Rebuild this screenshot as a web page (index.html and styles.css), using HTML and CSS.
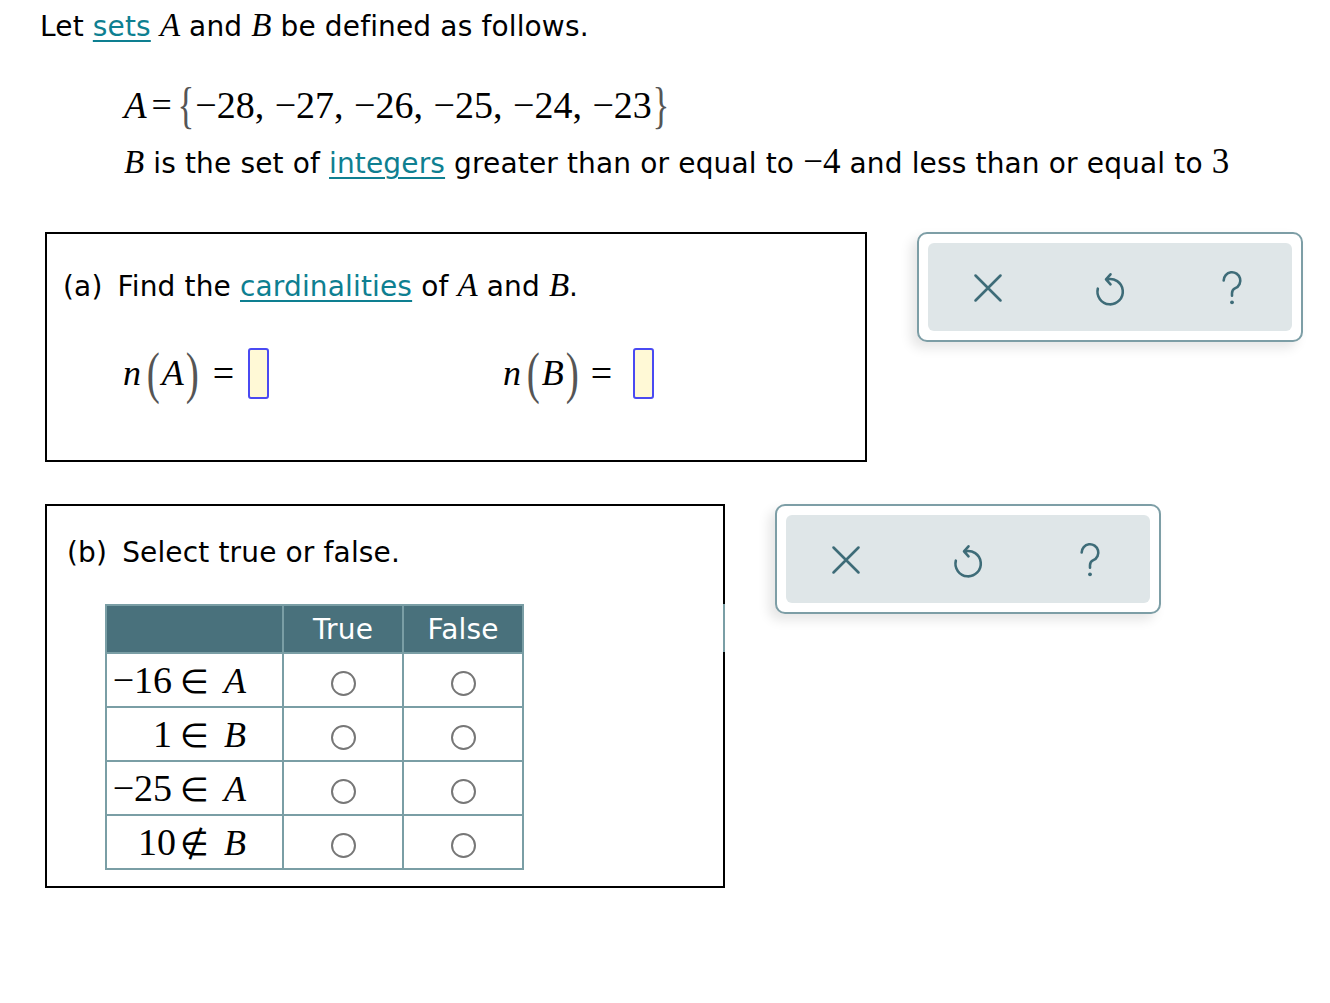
FILE: index.html
```html
<!DOCTYPE html>
<html>
<head>
<meta charset="utf-8">
<link rel="stylesheet" href="styles.css">
</head>
<body>
<div class="page">
  <p class="intro">Let <a class="lnk">sets</a> <span class="mi">A</span> and <span class="mi">B</span> be defined as follows.</p>
  <div class="defs">
    <div class="defA"><span class="mi">A</span><span class="eq">=</span><span class="brace">{</span><span class="mn">−28,</span><span class="mn">−27,</span><span class="mn">−26,</span><span class="mn">−25,</span><span class="mn">−24,</span><span class="mn last">−23</span><span class="brace">}</span></div>
    <div class="defB"><span class="mi">B</span> is the set of <a class="lnk">integers</a> greater than or equal to <span class="mn sm">−4</span> and less than or equal to <span class="mn sm">3</span></div>
  </div>

  <div class="row row-a">
    <div class="box box-a">
      <p class="q"><span class="lbl">(a)</span> Find the <a class="lnk">cardinalities</a> of <span class="mi">A</span> and <span class="mi">B</span>.</p>
      <div class="answers">
        <div class="ans"><span class="mi n">n</span><span class="paren">(</span><span class="mi">A</span><span class="paren">)</span><span class="eqs">=</span><span class="inp"></span></div>
        <div class="ans ans-b"><span class="mi n">n</span><span class="paren">(</span><span class="mi">B</span><span class="paren">)</span><span class="eqs">=</span><span class="inp"></span></div>
      </div>
    </div>
    <div class="panel">
      <div class="panel-in">
        <svg class="ic" viewBox="0 0 24 24"><path d="M4.5 4.5 L19.5 19.5 M19.5 4.5 L4.5 19.5"/></svg>
        <svg class="ic" viewBox="0 0 24 24"><path d="M12.3 3.8 L9.6 6.8 L12.3 9.8 M10 6.9 A7.6 7.6 0 1 1 4.7 12.4"/></svg>
        <svg class="ic" viewBox="0 0 24 24"><path d="M7 7.5 A5 5 0 1 1 14 12.1 C12.7 12.7 12 13.7 12 15.1 V16.6"/><circle class="dot" cx="12" cy="20.6" r="1.15"/></svg>
      </div>
    </div>
  </div>

  <div class="row row-b">
    <div class="box box-b">
      <p class="q qb"><span class="lbl">(b)</span> Select true or false.</p>
      <table class="tf">
        <thead><tr><th class="c0"></th><th>True</th><th>False</th></tr></thead>
        <tbody>
          <tr><td class="c0"><span class="mn">−16</span><span class="op">∈</span><span class="mi">A</span></td><td><span class="rad"></span></td><td><span class="rad"></span></td></tr>
          <tr><td class="c0"><span class="mn">1</span><span class="op">∈</span><span class="mi">B</span></td><td><span class="rad"></span></td><td><span class="rad"></span></td></tr>
          <tr><td class="c0"><span class="mn">−25</span><span class="op">∈</span><span class="mi">A</span></td><td><span class="rad"></span></td><td><span class="rad"></span></td></tr>
          <tr><td class="c0"><span class="mn">10</span><span class="op nin">∉</span><span class="mi">B</span></td><td><span class="rad"></span></td><td><span class="rad"></span></td></tr>
        </tbody>
      </table>
      <span class="edge"></span>
    </div>
    <div class="panel">
      <div class="panel-in">
        <svg class="ic" viewBox="0 0 24 24"><path d="M4.5 4.5 L19.5 19.5 M19.5 4.5 L4.5 19.5"/></svg>
        <svg class="ic" viewBox="0 0 24 24"><path d="M12.3 3.8 L9.6 6.8 L12.3 9.8 M10 6.9 A7.6 7.6 0 1 1 4.7 12.4"/></svg>
        <svg class="ic" viewBox="0 0 24 24"><path d="M7 7.5 A5 5 0 1 1 14 12.1 C12.7 12.7 12 13.7 12 15.1 V16.6"/><circle class="dot" cx="12" cy="20.6" r="1.15"/></svg>
      </div>
    </div>
  </div>
</div>
</body>
</html>
```
FILE: styles.css
```css
html, body { margin: 0; padding: 0; background: #fff; }
body {
  font-family: "DejaVu Sans", Verdana, sans-serif;
  font-size: 28px;
  letter-spacing: 0.15px;
  color: #000;
}
.page { padding: 7px 0 0 40px; }
p { margin: 0; }
.lnk { color: #0e7f91; text-decoration: underline; text-underline-offset: 4px; text-decoration-thickness: 2px; }
.mi { font-family: "Liberation Serif", "DejaVu Serif", serif; font-style: italic; font-size: 33px; letter-spacing: 0; }
.mn { font-family: "Liberation Serif", "DejaVu Serif", serif; font-size: 34px; letter-spacing: 0; }
.mn.sm { font-size: 35px; }
.intro { line-height: 36px; height: 36px; white-space: nowrap; }

.defs { padding-left: 84px; margin-top: 38px; }
.defA { display: flex; align-items: center; height: 48px; }
.defA .mi { font-size: 37px; }
.defA .mn { font-size: 38px; margin-right: 10.5px; }
.defA .mn.last { margin-right: 0; }
.eq { font-family: "Liberation Serif", serif; font-size: 36px; margin: 0 5px 0 5px; }
.brace { font-family: "Liberation Serif", serif; font-size: 50px; color: #555; transform: scaleX(0.7); display: inline-block; margin: 0 -3px; }
.defB { margin-top: 13px; line-height: 40px; height: 40px; white-space: nowrap; }

.row { display: flex; align-items: flex-start; gap: 50px; margin-left: 5px; }
.row-a { margin-top: 50px; }
.row-b { margin-top: 42px; }

.box { border: 2px solid #000; box-sizing: border-box; position: relative; flex-shrink: 0; }
.box-a { width: 822px; height: 230px; padding: 31px 0 0 16px; }
.box-b { width: 680px; height: 384px; padding: 27px 0 0 20px; }
.q { line-height: 40px; height: 40px; white-space: nowrap; }
.lbl { margin-right: 6px; }

.answers { display: flex; margin-top: 40px; padding-left: 60px; }
.ans { display: flex; align-items: center; width: 380px; height: 56px; flex-shrink: 0; }
.ans .n { font-size: 34px; margin-right: 4px; }
.ans .mi { font-size: 36px; }
.paren { font-family: "Liberation Serif", serif; font-size: 56px; color: #555; transform: scaleX(0.7); display: inline-block; line-height: 1; margin: 0 -1px; }
.eqs { font-family: "Liberation Serif", serif; font-size: 38px; margin: 0 14px 0 12px; }
.ans-b .eqs { margin: 0 21px 0 10px; }
.inp { width: 17px; height: 47px; border: 2px solid #4a4af2; border-radius: 3px; background: #fff9d6; display: inline-block; }

.panel {
  width: 386px; height: 110px; box-sizing: border-box; flex-shrink: 0;
  border: 2px solid #7d9ea6; border-radius: 10px; background: #fff;
  padding: 9px;
  box-shadow: -6px 6px 12px rgba(0,0,0,0.10);
}
.panel-in {
  background: #dfe6e8; border-radius: 6px; height: 100%; box-sizing: border-box;
  display: flex; justify-content: space-between; align-items: center; padding: 0 40px;
}
.ic { width: 40px; height: 40px; fill: none; stroke: #3e6c78; stroke-width: 1.55; stroke-linecap: round; stroke-linejoin: round; margin-top: 2px; }
.ic .dot { fill: #3e6c78; stroke: none; }

.tf { border-collapse: collapse; margin-top: 31px; margin-left: 38px; }
.tf th, .tf td { border: 2px solid #7a9ea5; padding: 0; }
.tf th { background: #49717c; color: #fff; font-weight: normal; height: 46px; width: 118px; font-size: 28px; }
.tf th.c0 { width: 175px; }
.tf td { height: 52px; text-align: center; }
.tf td.c0 { text-align: right; padding-right: 36px; white-space: nowrap; }
.tf td .mn { font-size: 38px; }
.tf td .mi { font-size: 36px; }
.op { font-family: "DejaVu Sans", sans-serif; font-size: 33px; margin: 0 15px 0 8px; }
.op.nin { margin-left: 4px; }
.rad { display: inline-block; width: 21px; height: 21px; border: 2px solid #777; border-radius: 50%; vertical-align: middle; margin-top: 4px; }

.edge { position: absolute; right: -2px; top: 98px; width: 2px; height: 48px; background: #7a9ea5; }
```
